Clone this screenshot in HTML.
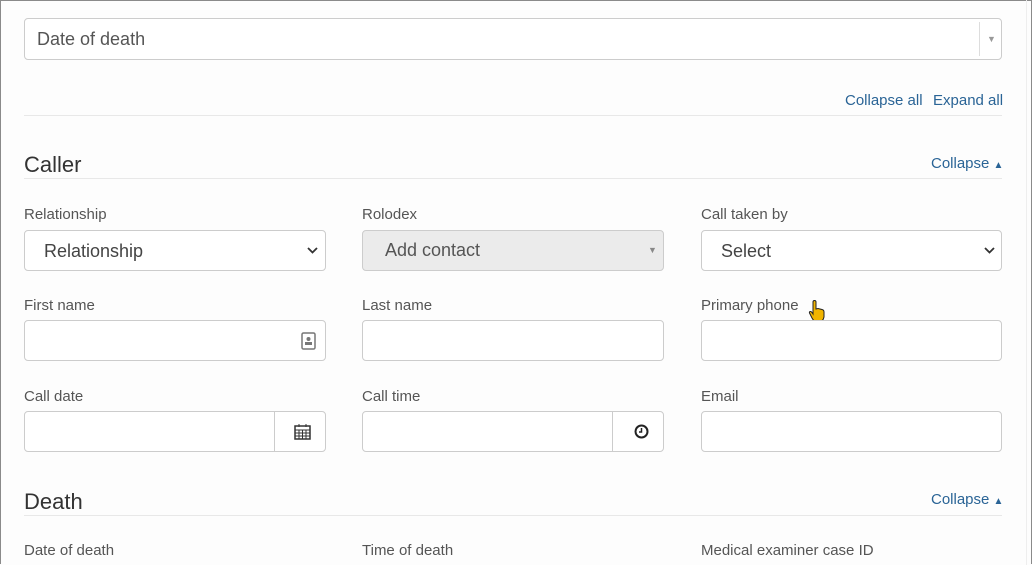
<!DOCTYPE html>
<html><head><style>
body{margin:0;width:1032px;height:565px;overflow:hidden;background:#fdfdfd;font-family:"Liberation Sans",sans-serif;}
.frame{position:absolute;left:0;top:0;width:1030px;height:563px;border:1px solid #8a8a8a;border-bottom:none;}
.a{position:absolute;box-sizing:border-box;}
.box{border:1px solid #ccc;border-radius:4px;background:#fff;height:41px;}
.lbl{font-size:15px;color:#555;}
.txt{font-size:18px;color:#444;}
.hr{height:1px;background:#e8e8e8;}
.link{color:#2a6496;font-size:15px;}
h2{margin:0;font-weight:normal;font-size:22px;color:#333;}
</style></head><body>
<div class="frame"></div>
<div class="a" style="left:1026px;top:0;width:1px;height:565px;background:#eee"></div>
<div class="a box" style="left:24px;top:18px;width:978px;height:42px;"></div>
<div class="a txt" style="left:37px;top:29px;color:#555">Date of death</div>
<div class="a" style="left:979px;top:22px;width:1px;height:34px;background:#ddd"></div>
<div class="a" style="left:987px;top:34px;font-size:9px;color:#999">▼</div>
<div class="a link" style="left:845px;top:92px">Collapse all</div>
<div class="a link" style="left:933px;top:92px">Expand all</div>
<div class="a hr" style="left:24px;top:115px;width:978px"></div>
<div class="a" style="left:24px;top:152px"><h2>Caller</h2></div>
<div class="a link" style="left:931px;top:155px">Collapse <span style="font-size:10px">▲</span></div>
<div class="a hr" style="left:24px;top:178px;width:978px"></div>

<div class="a lbl" style="left:24px;top:206px">Relationship</div>
<div class="a lbl" style="left:362px;top:206px">Rolodex</div>
<div class="a lbl" style="left:701px;top:206px">Call taken by</div>
<div class="a box" style="left:24px;top:230px;width:302px"></div>
<div class="a txt" style="left:44px;top:241px">Relationship</div>
<svg class="a" style="left:307px;top:247px" width="11" height="7"><path d="M1 1L5.5 5.5L10 1" stroke="#333" stroke-width="1.8" fill="none"/></svg>
<div class="a box" style="left:362px;top:230px;width:302px;background:#ebebeb"></div>
<div class="a txt" style="left:385px;top:240px;color:#555">Add contact</div>
<div class="a" style="left:648px;top:245px;font-size:9px;color:#888">▼</div>
<div class="a box" style="left:701px;top:230px;width:301px"></div>
<div class="a txt" style="left:721px;top:241px">Select</div>
<svg class="a" style="left:984px;top:247px" width="11" height="7"><path d="M1 1L5.5 5.5L10 1" stroke="#333" stroke-width="1.8" fill="none"/></svg>

<div class="a lbl" style="left:24px;top:297px">First name</div>
<div class="a lbl" style="left:362px;top:297px">Last name</div>
<div class="a lbl" style="left:701px;top:297px">Primary phone</div>
<svg class="a" style="left:808px;top:300px" width="18" height="24" viewBox="0 0 18 24"><path d="M5 2Q5 0.5 6.5 0.5Q8 0.5 8 2V9L10 8.5L12 9L14 9.5Q16 10 16 12V17Q15 22 10 22Q6 22 4 18L1.5 13Q1 11.5 2.5 11.5Q3.5 11.5 5 14Z" fill="#f0b400" stroke="#222" stroke-width="1"/></svg>
<div class="a box" style="left:24px;top:320px;width:302px"></div>
<svg class="a" style="left:301px;top:332px" width="15" height="18" viewBox="0 0 15 18"><rect x="1" y="1" width="13" height="16" rx="1.5" fill="none" stroke="#777" stroke-width="1.5"/><circle cx="7.5" cy="7" r="2" fill="#777"/><rect x="4" y="10" width="7" height="3" fill="#777"/></svg>
<div class="a box" style="left:362px;top:320px;width:302px"></div>
<div class="a box" style="left:701px;top:320px;width:301px"></div>

<div class="a lbl" style="left:24px;top:388px">Call date</div>
<div class="a lbl" style="left:362px;top:388px">Call time</div>
<div class="a lbl" style="left:701px;top:388px">Email</div>
<div class="a box" style="left:24px;top:411px;width:302px"></div>
<div class="a" style="left:274px;top:412px;width:1px;height:39px;background:#ccc"></div>
<svg class="a" style="left:294px;top:423px" width="17" height="17" viewBox="0 0 17 17"><rect x="1" y="3" width="15" height="13" fill="none" stroke="#333" stroke-width="1.5"/><path d="M1 7H16M5 1V4M12 1V4M1 10H16M1 13H16M5 7V16M8.5 7V16M12 7V16" stroke="#333" stroke-width="1"/></svg>
<div class="a box" style="left:362px;top:411px;width:302px"></div>
<div class="a" style="left:612px;top:412px;width:1px;height:39px;background:#ccc"></div>
<svg class="a" style="left:634px;top:424px" width="15" height="15" viewBox="0 0 15 15"><circle cx="7.5" cy="7.5" r="6" fill="none" stroke="#222" stroke-width="2"/><path d="M7.5 4V8H5" stroke="#222" stroke-width="1.5" fill="none"/></svg>
<div class="a box" style="left:701px;top:411px;width:301px"></div>

<div class="a" style="left:24px;top:489px"><h2>Death</h2></div>
<div class="a link" style="left:931px;top:491px">Collapse <span style="font-size:10px">▲</span></div>
<div class="a hr" style="left:24px;top:515px;width:978px"></div>
<div class="a lbl" style="left:24px;top:542px">Date of death</div>
<div class="a lbl" style="left:362px;top:542px">Time of death</div>
<div class="a lbl" style="left:701px;top:542px">Medical examiner case ID</div>
</body></html>
